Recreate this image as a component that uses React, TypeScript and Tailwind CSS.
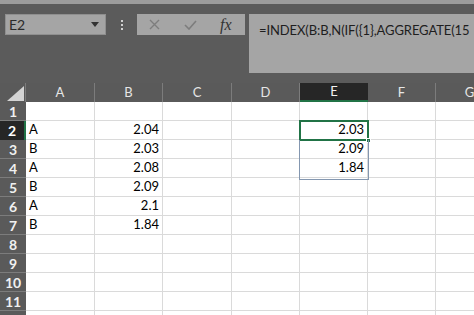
import React from "react";

const cols = ["A", "B", "C", "D", "E", "F", "G"];

const data: Record<number, string[]> = {
  2: ["A", "2.04", "", "", "2.03"],
  3: ["B", "2.03", "", "", "2.09"],
  4: ["A", "2.08", "", "", "1.84"],
  5: ["B", "2.09"],
  6: ["A", "2.1"],
  7: ["B", "1.84"],
};

const gridCols = "grid grid-cols-[26px_69px_68px_69px_68px_68px_68px_68px]";

function Corner() {
  return (
    <div className="h-[19px] bg-[#5a5a5a] border-r border-[#7c7c7c] relative">
      <svg className="absolute right-[1px] bottom-[1px]" width="17" height="15" viewBox="0 0 17 15">
        <polygon points="17,0 17,15 0,15" fill="#d4d4d4" />
      </svg>
    </div>
  );
}

export default function App() {
  const rows = Array.from({ length: 12 }, (_, i) => i + 1);

  return (
    <div className="w-[474px] h-[315px] overflow-hidden bg-white font-['Lato',sans-serif]">
      <div className="h-[4px] bg-[#9c9c9c]" />

      {/* toolbar */}
      <div className="h-[79px] bg-[#5b5b5b] pt-[10px] pl-[5px] flex items-start">
        <div className="shrink-0 w-[101px] h-[21px] bg-[#a5a5a5] border border-[#8f8f8f] flex items-center justify-between pl-[3px] pr-[6px]">
          <span className="text-[14px] text-[#2b2b2b] leading-none">E2</span>
          <svg width="8" height="5" viewBox="0 0 8 5">
            <polygon points="0,0 8,0 4,5" fill="#333" />
          </svg>
        </div>
        <div className="shrink-0 w-[31px] h-[21px] flex flex-col items-center justify-center gap-[2px]">
          <div className="w-[2px] h-[2px] bg-[#d0d0d0]" />
          <div className="w-[2px] h-[2px] bg-[#d0d0d0]" />
          <div className="w-[2px] h-[2px] bg-[#d0d0d0]" />
        </div>
        <div className="shrink-0 w-[108px] h-[21px] bg-[#a5a5a5] flex items-center pl-[12px]">
          <svg width="11" height="11" viewBox="0 0 11 11">
            <path d="M1 1 L10 10 M10 1 L1 10" stroke="#7d7d7d" strokeWidth="1.4" />
          </svg>
          <svg width="13" height="10" viewBox="0 0 13 10" className="ml-[24px]">
            <path d="M1 5 L5 9 L12 1" stroke="#7d7d7d" strokeWidth="1.6" fill="none" />
          </svg>
          <span className="ml-[23px] font-['Liberation_Serif',serif] italic text-[16px] text-[#333] leading-none">
            fx
          </span>
        </div>
        <div className="ml-[4px] flex-1 min-w-0 overflow-hidden h-[59px] bg-[#a5a5a5] pl-[10px] pt-[3px]">
          <span className="text-[13px] tracking-[-0.1px] text-[#1e1e1e] whitespace-nowrap">{"=INDEX(B:B,N(IF({1},AGGREGATE(15"}</span>
        </div>
      </div>

      {/* column headers */}
      <div className={gridCols}>
        <Corner />
        {cols.map((c) => (
          <div
            key={c}
            className={
              c === "E"
                ? "h-[19px] bg-[#262626] border-b-2 border-[#217346] text-[#f2f2f2] text-[13px] flex items-center justify-center"
                : "h-[19px] bg-[#5a5a5a] border-r border-[#7c7c7c] text-[#e6e6e6] text-[13px] flex items-center justify-center"
            }
          >
            {c}
          </div>
        ))}
      </div>

      {/* rows */}
      <div className="relative">
        {rows.map((r) => (
          <div key={r} className={gridCols}>
            <div
              className={
                r === 2
                  ? "h-[19px] bg-[#262626] border-r-2 border-[#217346] text-white text-[14px] font-bold flex items-center justify-center"
                  : "h-[19px] bg-[#5a5a5a] border-b border-[#7c7c7c] text-[#f0f0f0] text-[14px] font-bold flex items-center justify-center"
              }
            >
              {r < 12 ? r : ""}
            </div>
            {cols.map((c, ci) => {
              const v = data[r]?.[ci] ?? "";
              const isNum = v !== "" && !isNaN(Number(v));
              return (
                <div
                  key={c}
                  className={
                    "h-[19px] border-r border-b border-[#dadada] text-[13px] text-black flex items-center px-[3px] " +
                    (isNum ? "justify-end" : "justify-start")
                  }
                >
                  {v}
                </div>
              );
            })}
          </div>
        ))}

        {/* active cell E2 */}
        <div className="absolute left-[299px] top-[18px] w-[70px] h-[21px] border-2 border-[#217346]" />
        <div className="absolute left-[366px] top-[36px] w-[5px] h-[5px] bg-[#217346] border border-white" />
        {/* selected range E3:E4 */}
        <div className="absolute left-[299px] top-[38px] w-[70px] h-[40px] border border-[#8497b0] border-t-0" />
      </div>
    </div>
  );
}
